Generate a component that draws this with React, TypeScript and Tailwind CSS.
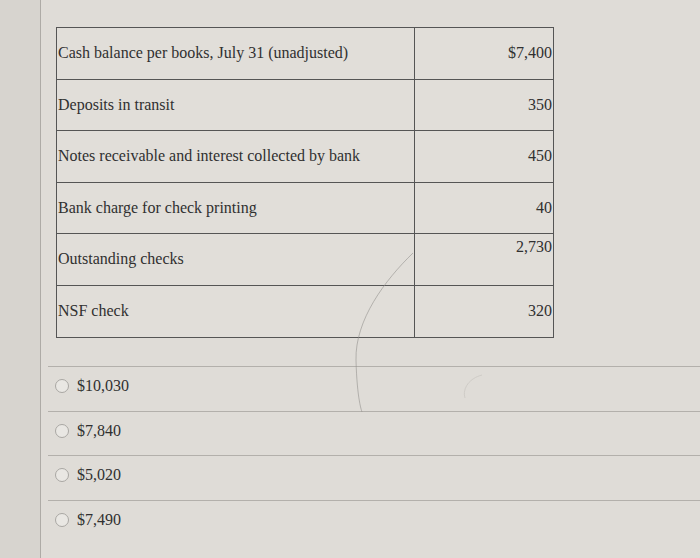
import React from "react";

const rows: { label: string; value: string; top?: boolean }[] = [
  { label: "Cash balance per books, July 31 (unadjusted)", value: "$7,400" },
  { label: "Deposits in transit", value: "350" },
  { label: "Notes receivable and interest collected by bank", value: "450" },
  { label: "Bank charge for check printing", value: "40" },
  { label: "Outstanding checks", value: "2,730", top: true },
  { label: "NSF check", value: "320" },
];

const options = ["$10,030", "$7,840", "$5,020", "$7,490"];

export default function App() {
  return (
    <div className="relative w-[700px] h-[558px] overflow-hidden bg-[#dfdcd7] flex font-['Liberation_Serif',serif] text-[#303030]">
      <div className="w-[41px] shrink-0 border-r border-[#aeaba6] bg-[#d7d4cf]" />
      <div className="flex-1 flex flex-col">
        <div className="mt-[27px] ml-[15px] w-[498px] border-[1.5px] border-[#555] grid grid-cols-[358px_1fr] bg-[#e1ded9]">
          {rows.map((r, i) => {
            const last = i === rows.length - 1;
            return (
              <React.Fragment key={r.label}>
                <div
                  className={`h-[51.5px] flex items-center pl-[1px] text-[16px] border-r-[1.5px] border-[#555] ${
                    last ? "" : "border-b-[1.5px]"
                  }`}
                >
                  {r.label}
                </div>
                <div
                  className={`h-[51.5px] flex justify-end pr-[1px] text-[16px] border-[#555] ${
                    r.top ? "items-start pt-[1px]" : "items-center"
                  } ${last ? "" : "border-b-[1.5px]"}`}
                >
                  {r.value}
                </div>
              </React.Fragment>
            );
          })}
        </div>
        <div className="mt-[28px] ml-[7px] flex flex-col">
          {options.map((o) => (
            <div
              key={o}
              className="h-[44.5px] border-t border-[#b3b0ab] flex items-center pb-[5px] pl-[7px] gap-[8px] text-[16px]"
            >
              <span className="w-[14px] h-[14px] rounded-full border border-[#a9a7a3] bg-[#e9e7e3]" />
              <span>{o}</span>
            </div>
          ))}
        </div>
      </div>
      <svg className="absolute left-0 top-0 pointer-events-none" width="700" height="558">
        <path
          d="M 413 253 C 385 280, 355 320, 356 360 S 362 412 362 412"
          fill="none"
          stroke="#8e8c88"
          strokeWidth="0.8"
          opacity="0.7"
        />
        <path
          d="M 482 375 C 470 378, 462 388, 465 398"
          fill="none"
          stroke="#cfccc7"
          strokeWidth="1"
        />
      </svg>
    </div>
  );
}
